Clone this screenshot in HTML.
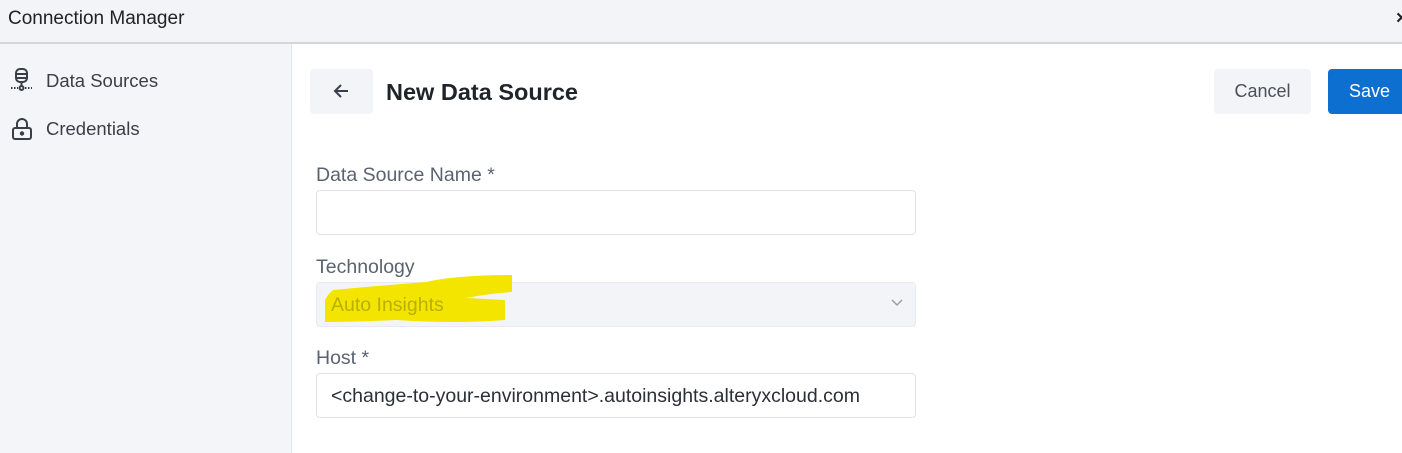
<!DOCTYPE html>
<html><head><meta charset="utf-8"><style>
*{box-sizing:border-box;margin:0;padding:0}
body{width:1402px;height:453px;overflow:hidden;background:#fff;font-family:"Liberation Sans",sans-serif;position:relative;color:#2b2f36}
.hdr{position:absolute;left:0;top:0;width:1402px;height:44px;background:#f2f4f8;border-bottom:2px solid #d4d6da}
.hdr span{position:absolute;left:8px;top:8px;font-size:19px;color:#222}
.hdr .x{left:1396px;top:8px;font-weight:bold}
.side{position:absolute;left:0;top:44px;width:292px;height:409px;background:#f4f5f9;border-right:1px solid #e3e5ea}
.item{position:absolute;left:46px;font-size:18.5px;color:#3a3f47}
.back{position:absolute;left:310px;top:69px;width:63px;height:45px;background:#f2f4f8;border-radius:4px}
h1{position:absolute;left:386px;top:79px;font-size:23.5px;font-weight:bold;color:#1f232a}
.btn{position:absolute;top:69px;height:45px;border-radius:4px;font-size:18px;line-height:45px;text-align:center}
.lbl{position:absolute;left:316px;font-size:19.5px;color:#5c6370}
.inp{position:absolute;left:316px;width:600px;height:45px;border:1px solid #dfe2e8;border-radius:4px;background:#fff}
</style></head><body>
<div class="hdr"><span>Connection Manager</span><span class="x">×</span></div>
<div class="side">
<svg style="position:absolute;left:10px;top:23px" width="24" height="26" viewBox="0 0 24 26" fill="none" stroke="#3a3f47" stroke-width="2"><rect x="6" y="2" width="11" height="13" rx="4"/><line x1="6" y1="7" x2="17" y2="7"/><line x1="6" y1="11" x2="17" y2="11"/><line x1="11.5" y1="15" x2="11.5" y2="19"/><circle cx="11.5" cy="21" r="2"/><line x1="1" y1="21" x2="8" y2="21" stroke-dasharray="1.5 1.5"/><line x1="15" y1="21" x2="22" y2="21" stroke-dasharray="1.5 1.5"/></svg>
<div class="item" style="top:26px">Data Sources</div>
<svg style="position:absolute;left:10px;top:73px" width="24" height="24" viewBox="0 0 24 24" fill="none" stroke="#3a3f47" stroke-width="2"><path d="M7 11V7a5 5 0 0 1 10 0v4"/><rect x="3" y="11" width="18" height="11" rx="2"/><circle cx="12" cy="16.5" r="1.2" fill="#3a3f47"/></svg>
<div class="item" style="top:74px">Credentials</div>
</div>
<div class="back"><svg style="position:absolute;left:22px;top:13px" width="18" height="18" viewBox="0 0 18 18" fill="none" stroke="#3a3f47" stroke-width="2"><path d="M16 9H3M9 3L3 9l6 6"/></svg></div>
<h1>New Data Source</h1>
<div class="btn" style="left:1214px;width:97px;background:#f2f4f8;color:#4a4f58">Cancel</div>
<div class="btn" style="left:1328px;width:80px;background:#0d6fcf;color:#fff;text-align:left;padding-left:21px">Save</div>
<div class="lbl" style="top:164px">Data Source Name *</div>
<div class="inp" style="top:190px"></div>
<div class="lbl" style="top:256px">Technology</div>
<div class="inp" style="top:282px;background:#f3f4f8;border-color:#e8eaef"></div>
<svg style="position:absolute;left:316px;top:270px" width="200" height="60"><path d="M17 20 Q60 16 110 12 Q140 5 196 5 L196 22 Q170 24 150 28 L189 30 L189 50 Q140 54 80 50 Q40 52 9 52 L9 30 Q12 24 17 20 Z" fill="#f3e500"/></svg>
<div style="position:absolute;left:331px;top:294px;font-size:19.5px;color:#b9b000">Auto Insights</div>
<svg style="position:absolute;left:890px;top:298px" width="14" height="10" viewBox="0 0 14 10" fill="none" stroke="#9aa0a8" stroke-width="1.5"><path d="M2 2l5 5 5-5"/></svg>
<div class="lbl" style="top:347px">Host *</div>
<div class="inp" style="top:373px"></div>
<div style="position:absolute;left:331px;top:385px;font-size:19.5px;color:#2b2f36">&lt;change-to-your-environment&gt;.autoinsights.alteryxcloud.com</div>
</body></html>
